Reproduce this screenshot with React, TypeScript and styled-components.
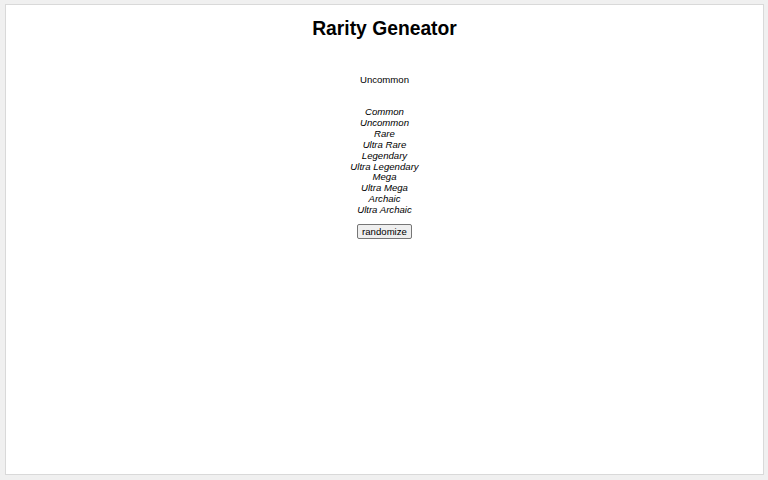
import React, { useState } from 'react';
import styled, { createGlobalStyle } from 'styled-components';

const rarities = [
    'Common',
    'Uncommon',
    'Rare',
    'Ultra Rare',
    'Legendary',
    'Ultra Legendary',
    'Mega',
    'Ultra Mega',
    'Archaic',
    'Ultra Archaic',
];

export default function App() {
    const [current, setCurrent] = useState('Uncommon');

    const randomize = () => {
        setCurrent(rarities[Math.floor(Math.random() * rarities.length)]);
    };

    return (
        <>
            <GlobalStyle />
            <Frame>
                <Panel>
                    <Title>Rarity Geneator</Title>
                    <Result>{current}</Result>
                    <RarityList>
                        {rarities.map((r) => (
                            <RarityItem key={r}>{r}</RarityItem>
                        ))}
                    </RarityList>
                    <Button onClick={randomize}>randomize</Button>
                </Panel>
            </Frame>
        </>
    );
}

const GlobalStyle = createGlobalStyle`
    html, body {
        margin: 0;
        padding: 0;
        background: #f0f0f0;
    }
    body {
        font-family: "Liberation Sans", Arial, sans-serif;
        color: #000;
    }
`

export const Frame = styled.div`
    width: 768px;
    height: 480px;
    box-sizing: border-box;
    padding: 4px 4px 5px 5px;
    background: #f0f0f0;
`

export const Panel = styled.div`
    height: 100%;
    box-sizing: border-box;
    background: #fff;
    border: 1px solid #d9d9d9;
    display: flex;
    flex-direction: column;
    align-items: center;
    padding-top: 13px;
`

export const Title = styled.h1`
    font-size: 19.3px;
    font-weight: bold;
    line-height: 22px;
    margin: 0;
`

export const Result = styled.div`
    font-size: 9.6px;
    line-height: 11px;
    margin-top: 34px;
`

export const RarityList = styled.div`
    margin-top: 22px;
    display: flex;
    flex-direction: column;
    align-items: center;
`

export const RarityItem = styled.div`
    font-size: 9.6px;
    line-height: 10.9px;
    font-style: italic;
`

export const Button = styled.button`
    margin-top: 8px;
    font-family: "Liberation Sans", Arial, sans-serif;
    font-size: 9.6px;
    line-height: 11px;
    padding: 1px 4px;
    color: #000;
    background: #efefef;
    border: 1px solid #767676;
    border-radius: 2px;
`
